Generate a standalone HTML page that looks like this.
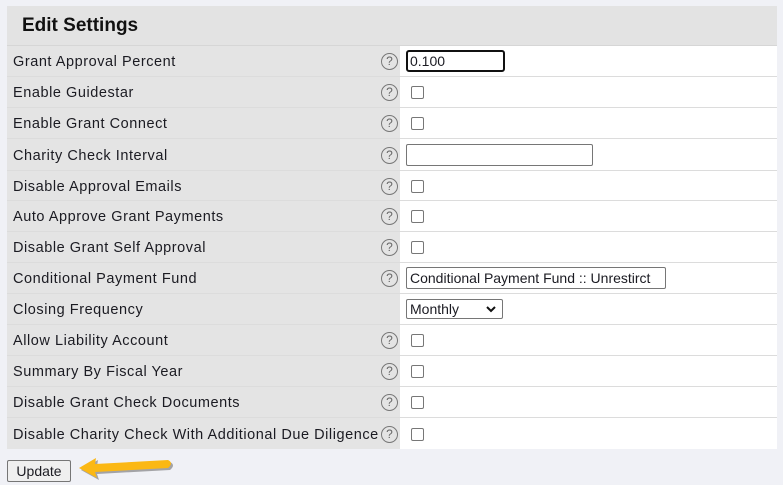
<!DOCTYPE html>
<html><head><meta charset="utf-8"><style>
*{margin:0;padding:0;box-sizing:border-box}
body{width:783px;height:485px;background:#f0f1f6;font-family:"Liberation Sans",sans-serif;position:relative;overflow:hidden;color:#1b1b22}
.hdr{position:absolute;left:7px;top:6px;width:770px;height:40px;background:#e3e3e3;border-bottom:1px solid #d6d6d6}
.hdr span{position:absolute;left:15px;top:9px;font-size:19px;font-weight:bold;color:#111}
.row{position:absolute;left:7px;width:770px;background:#fff;border-bottom:1px solid #dcdcdc}
.row .l{position:absolute;left:0;top:0;bottom:0;width:393px;background:#e4e4e4}
.row .t{position:absolute;left:6px;top:50%;transform:translateY(-45%);font-size:14.5px;letter-spacing:0.55px;white-space:nowrap}
.q{position:absolute;left:374px;top:50%;margin-top:-8px;width:17px;height:17px;border:1.2px solid #777;border-radius:50%;font-size:12px;line-height:15px;text-align:center;color:#666}
.cb{position:absolute;left:404px;top:50%;margin-top:-6px;width:13px;height:13px;border:1px solid #777;border-radius:2px;background:#fff}
.in{position:absolute;left:399px;top:50%;height:22px;margin-top:-11px;border:1px solid #767676;border-radius:2px;background:#fff;font-size:14px;padding-left:3px;line-height:20px;white-space:nowrap;overflow:hidden}
</style></head><body>
<div class="hdr"><span>Edit Settings</span></div>

<div class="row" style="top:46px;height:31px"><div class="l"><div class="t">Grant Approval Percent</div><div class="q">?</div></div><div class="in" style="width:99px;border:2px solid #111;border-radius:3px;padding-left:2px;line-height:18px">0.100</div></div>
<div class="row" style="top:77px;height:31px"><div class="l"><div class="t">Enable Guidestar</div><div class="q">?</div></div><div class="cb"></div></div>
<div class="row" style="top:108px;height:31px"><div class="l"><div class="t">Enable Grant Connect</div><div class="q">?</div></div><div class="cb"></div></div>
<div class="row" style="top:139px;height:32px"><div class="l"><div class="t">Charity Check Interval</div><div class="q">?</div></div><div class="in" style="width:187px"></div></div>
<div class="row" style="top:171px;height:30px"><div class="l"><div class="t">Disable Approval Emails</div><div class="q">?</div></div><div class="cb"></div></div>
<div class="row" style="top:201px;height:31px"><div class="l"><div class="t">Auto Approve Grant Payments</div><div class="q">?</div></div><div class="cb"></div></div>
<div class="row" style="top:232px;height:31px"><div class="l"><div class="t">Disable Grant Self Approval</div><div class="q">?</div></div><div class="cb"></div></div>
<div class="row" style="top:263px;height:31px"><div class="l"><div class="t">Conditional Payment Fund</div><div class="q">?</div></div><div class="in" style="width:260px">Conditional Payment Fund :: Unrestirct</div></div>
<div class="row" style="top:294px;height:31px"><div class="l"><div class="t">Closing Frequency</div></div><div class="in" style="width:97px;height:20px;margin-top:-10px;line-height:18px">Monthly<svg style="position:absolute;right:6px;top:6px" width="10" height="7" viewBox="0 0 10 7"><path d="M1 1l4 4 4-4" stroke="#111" stroke-width="2" fill="none"/></svg></div></div>
<div class="row" style="top:325px;height:31px"><div class="l"><div class="t">Allow Liability Account</div><div class="q">?</div></div><div class="cb"></div></div>
<div class="row" style="top:356px;height:31px"><div class="l"><div class="t">Summary By Fiscal Year</div><div class="q">?</div></div><div class="cb"></div></div>
<div class="row" style="top:387px;height:31px"><div class="l"><div class="t">Disable Grant Check Documents</div><div class="q">?</div></div><div class="cb"></div></div>
<div class="row" style="top:418px;height:31px;border-bottom:none"><div class="l"><div class="t">Disable Charity Check With Additional Due Diligence</div><div class="q">?</div></div><div class="cb"></div></div>

<div style="position:absolute;left:7px;top:460px;width:64px;height:22px;border:1px solid #767676;border-radius:2px;background:#efefef;font-size:14px;text-align:center;line-height:20px">Update</div>
<svg style="position:absolute;left:0;top:0" width="783" height="485">
<g transform="translate(2,2)" fill="#444" opacity="0.45"><path d="M79 468 L96 458 L95 464 L168 460 Q174 463 168 468 L95 472 L97 478 Z"/></g>
<path d="M79 468 L96 458 L95 464 L168 460 Q174 463 168 468 L95 472 L97 478 Z" fill="#fbb814"/>
</svg>
</body></html>
